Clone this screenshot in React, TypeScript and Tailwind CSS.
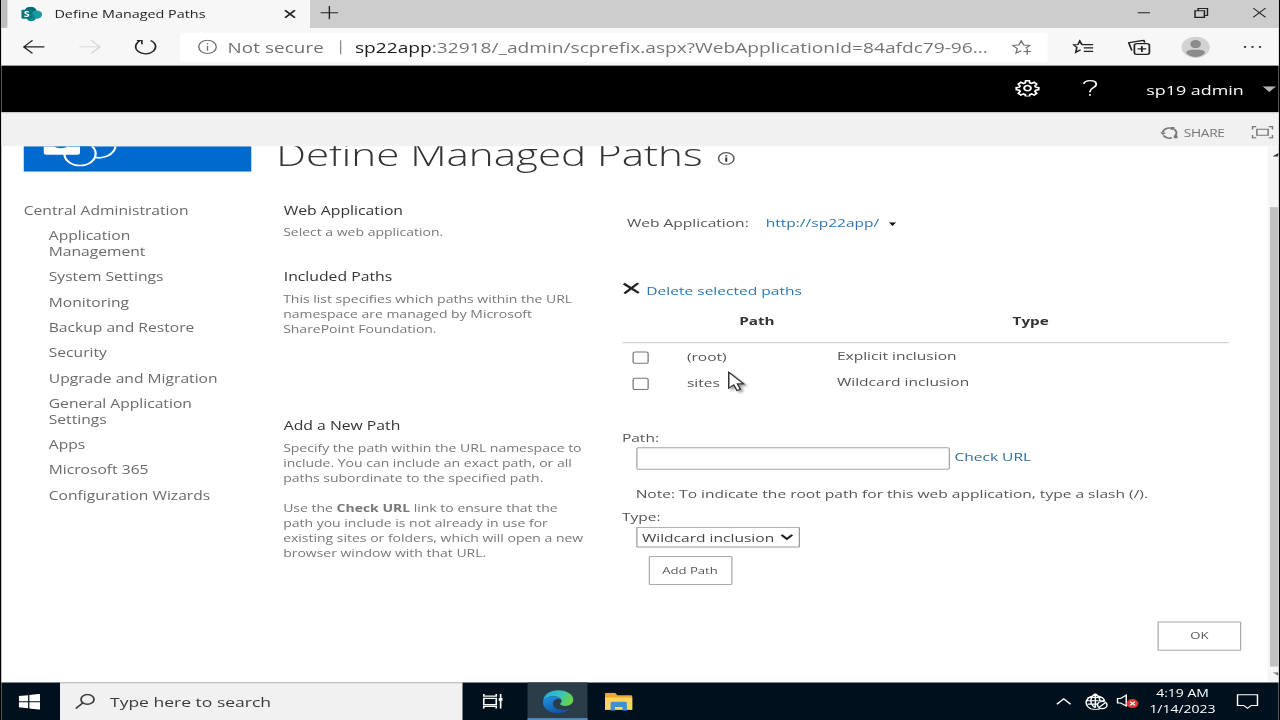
import type { ReactNode } from "react";
import clsx from "clsx";

const NAV_ITEMS = [
  ["Application", "Management"],
  ["System Settings"],
  ["Monitoring"],
  ["Backup and Restore"],
  ["Security"],
  ["Upgrade and Migration"],
  ["General Application", "Settings"],
  ["Apps"],
  ["Microsoft 365"],
  ["Configuration Wizards"],
];

const PATHS = [
  { path: "(root)", type: "Explicit inclusion" },
  { path: "sites", type: "Wildcard inclusion" },
];

interface IconProps {
  w: number;
  h: number;
  className?: string;
  stroke?: number;
  children: ReactNode;
}

const Icon = ({ w, h, className, stroke = 1, children }: IconProps) => (
  <svg
    width={w}
    height={h}
    viewBox={`0 0 ${w} ${h}`}
    fill="none"
    stroke="currentColor"
    strokeWidth={stroke}
    className={clsx("block shrink-0", className)}
  >
    {children}
  </svg>
);

const TabStrip = () => (
  <div className="flex h-[30px] bg-[#cdcdcd] text-[#222]">
    <div className="w-[5px] rounded-br-md bg-[#bdbdbd]" />
    <div className="flex w-[242px] items-center bg-[#f7f7f7] pl-[10.5px]">
      <Icon w={17} h={16} stroke={0}>
        <circle cx="7.5" cy="5" r="4.8" fill="#036c70" />
        <circle cx="12.3" cy="8.5" r="4.4" fill="#1a9ba1" />
        <circle cx="8" cy="12" r="3.6" fill="#138a90" />
        <rect x="0" y="3.5" width="9" height="9.5" rx="1" fill="#03787c" />
        <text x="2" y="11.4" fontSize="8.5" fontWeight="700" fill="#fff">S</text>
      </Icon>
      <span className="ml-[10px] w-[188px] text-[11.5px] whitespace-nowrap">
        Define Managed Paths
      </span>
      <Icon w={10} h={10} stroke={1.6} className="-ml-[5px]">
        <path d="M1 1l8 8M9 1l-8 8" />
      </Icon>
    </div>
    <div className="flex flex-1 items-center rounded-bl-md pb-[3px] pl-[8px]">
      <Icon w={15} h={15} stroke={1.1}>
        <path d="M7.5 0.5v14M0.5 7.5h14" />
      </Icon>
      <Icon w={11} h={11} className="ml-[639px]">
        <path d="M0 5.5h10" />
      </Icon>
      <Icon w={12} h={12} className="ml-[34px]" stroke={1.2}>
        <path d="M1 3.5h7.500v7H1zM3.500 3.500V1h7.500v7.500H8.500" />
      </Icon>
      <Icon w={11} h={11} className="ml-[35px]">
        <path d="M0.500 0.500l10 10M10.500 0.500l-10 10" />
      </Icon>
    </div>
  </div>
);

const Toolbar = () => (
  <div className="flex h-[40px] items-center bg-[#f7f7f7] pl-[17px] text-[#222]">
    <Icon w={18} h={16} stroke={1.2}>
      <path d="M8 1L1 8l7 7M1 8h16.500" />
    </Icon>
    <Icon w={18} h={16} stroke={1} className="ml-[27px] text-[#d0d0d0]">
      <path d="M10 1l7 7-7 7M17 8H0.500" />
    </Icon>
    <Icon w={19} h={18} stroke={1.3} className="ml-[26px]">
      <path d="M5 2.500A8 7.600 0 1 0 13.500 2.200M2.500 2.200h4v4" />
    </Icon>
    <div className="ml-[18px] flex h-[31px] w-[694px] items-center rounded-[3px] bg-white pl-[14px] text-[#707070]">
      <Icon w={16} h={16} stroke={1.1}>
        <circle cx="8" cy="8" r="7" />
        <path d="M8 7v5M8 4v1.500" />
      </Icon>
      <span className="ml-[8px] w-[90px] pt-px text-[15px] tracking-[0.1px] whitespace-nowrap">Not secure</span>
      <span className="h-[15px] w-px bg-[#8a8a8a]" />
      <span className="ml-[11px] w-[515px] pt-px text-[15.35px] tracking-[-0.02px] whitespace-nowrap text-[#767676]">
        <span className="text-[#1b1b1b]">sp22app</span>
        :32918/_admin/scprefix.aspx?WebApplicationId=84afdc79-96...
      </span>
      <Icon w={17} h={17} stroke={1.1} className="ml-[10px]">
        <path d="M8 12.200l-4.200 2.500 1-4.900L1.200 6.500l4.800-.6L8 1.500l2 4.400 4.800.6-3.200 3" />
        <path d="M12.800 10v6M9.800 13h6" />
      </Icon>
    </div>
    <Icon w={17} h={16} stroke={1.3} className="ml-[20px]">
      <path d="M8.500 5.300H7.300L5.800 1.500 4.400 5.500 0.800 5.800 3.500 8.500 2.600 13.800 6.500 11M7.500 5.500H16.500M9 9h7.500M9 12.700h7.500" />
    </Icon>
    <Icon w={19} h={17} stroke={1.4} className="ml-[27px]">
      <rect x="5.500" y="4.500" width="12" height="11.500" rx="2" />
      <path d="M11.500 7v6.500M8 10.200h7M3.500 12L1 3.500 13 1l.8 2.500" />
    </Icon>
    <Icon w={23} h={23} stroke={0} className="ml-[24px]">
      <circle cx="11.500" cy="11.500" r="11.300" fill="#d2d2d2" />
      <circle cx="11.500" cy="8" r="4.300" fill="#8b8b8b" />
      <path d="M4 17.500c0-3 3-3.500 7.500-3.500s7.500.5 7.500 3.500c-2 3-4.500 4.300-7.500 4.300s-5.500-1.300-7.500-4.300z" fill="#8b8b8b" />
    </Icon>
    <Icon w={16} h={4} stroke={0} className="ml-[26px]">
      <g fill="#222">
        <circle cx="2" cy="2" r="1" />
        <circle cx="8" cy="2" r="1" />
        <circle cx="14" cy="2" r="1" />
      </g>
    </Icon>
  </div>
);

const SuiteBar = () => (
  <div className="flex h-[50px] items-center justify-end bg-black text-white">
    <Icon w={20} h={18} stroke={1.6} className="mb-[2px]">
      <circle cx="10" cy="9" r="2.700" />
      <path d="M8.600 1.200h2.800l.5 2.200 1.400.6 2-1.200 2 2-1.300 1.900.6 1.300 2.300.5v2.200l-2.300.5-.6 1.400 1.300 1.900-2 1.900-2-1.200-1.400.6-.5 2.200H8.600l-.5-2.200-1.400-.6-2 1.200-2-1.900L4 12.600l-.6-1.400-2.300-.5V8.500l2.300-.5.6-1.300-1.300-1.900 2-2 2 1.200 1.400-.6z" />
    </Icon>
    <Icon w={14} h={18} stroke={1.500} className="mb-[2px] ml-[33px]">
      <path d="M2 4.500C2.500 2 4.500 1 7 1c3 0 5 1.500 5 4 0 3.500-5 3.800-5 7.500v.8M7 15.500v1.500" />
    </Icon>
    <span className="ml-[38px] w-[93px] pt-px text-[14.3px] whitespace-nowrap">sp19 admin</span>
    <Icon w={11} h={6} stroke={0}>
      <path d="M0 0h11L5.500 6z" fill="#b5b5b5" />
    </Icon>
    <span className="w-[2px]" />
  </div>
);

const RibbonRow = () => (
  <div className="flex h-[36px] items-center justify-end border-t border-[#dcdcdc] bg-[#f1f1f1] pt-[6px] text-[#777]">
    <Icon w={15} h={14} stroke={1.700}>
      <path d="M2.200 6A5.300 5.300 0 0 1 8.500 1.700M11.500 3a5.300 5.300 0 0 1 .5 7M9.500 12A5.300 5.300 0 0 1 2.800 9.500" />
      <path d="M0 6l2.200 3L5 6.500zM11 9.500h3v3h-3zM8.500 0.500h3v3h-3z" fill="currentColor" stroke="none" />
    </Icon>
    <span className="ml-[4px] w-[54px] pt-px text-[11px] tracking-[-0.25px]">SHARE</span>
    <Icon w={18} h={14} stroke={1.2} className="mb-[1px]">
      <path d="M4 1H1v3M14 1h3v3M4 13H1v-3M14 13h3v-3M4.500 3.800h9v6.400h-9z" />
    </Icon>
    <span className="w-[4px]" />
  </div>
);

const Sidebar = () => (
  <nav className="w-[182px] shrink-0 text-[12.5px] leading-[17px] whitespace-nowrap text-[#6a6a6a]">
    <div className="h-[27px] bg-[#0069cc]">
      <Icon w={182} h={27} stroke={1.800} className="text-white">
        <path d="M55 11c8 4 18-2 18.500-12" />
        <circle cx="45" cy="8" r="12.500" fill="#0069cc" />
        <path d="M16 0h29v7q0 2-2 2H18q-2 0-2-2z" fill="#fff" stroke="none" />
        <path d="M24 0q5 4.500 12 0z" fill="#0069cc" stroke="none" />
      </Icon>
    </div>
    <p className="mt-[32.500px]">Central Administration</p>
    <ul className="mt-[10px] space-y-[10px] pl-[20px]">
      {NAV_ITEMS.map((lines) => (
        <li key={lines[0]}>
          {lines.map((line) => (
            <div key={line}>{line}</div>
          ))}
        </li>
      ))}
    </ul>
  </nav>
);

interface SectionProps {
  title: string;
  className: string;
  description: ReactNode;
  children: ReactNode;
}

const Section = ({ title, className, description, children }: SectionProps) => (
  <section className={clsx("flex", className)}>
    <div className="w-[271px] shrink-0 pt-px whitespace-nowrap">
      <h3 className="pl-[0.5px] text-[12.6px] leading-[18px] text-[#333]">{title}</h3>
      <div className="mt-[6px] text-[11.2px] leading-[16px] text-[#777]">{description}</div>
    </div>
    <div className="flex-1 text-[12.45px] whitespace-nowrap text-[#555]">{children}</div>
  </section>
);

const PathTable = () => (
  <div className="w-[485px]">
    <div className="flex h-[42px] items-start border-b border-[#c6c6c6] pt-[10px] font-bold text-[#333]">
      <span className="w-[216px] text-center text-[12.2px] leading-[18px]">Path</span>
      <span className="w-[222px] text-center text-[12.2px] leading-[18px]">Type</span>
    </div>
    {PATHS.map(({ path, type }) => (
      <div key={path} className="flex h-[28px] items-center pt-[2px]">
        <span className="ml-[8px] size-[13px] rounded-[2px] border border-[#767676] bg-white" />
        <span className="ml-[31px] w-[120px] pt-[1px]">{path}</span>
        <span className="pb-[2px]">{type}</span>
      </div>
    ))}
  </div>
);

const MainContent = () => (
  <main className="ml-[20px] flex-1">
    <div className="-mt-[16px] flex h-[75px] items-start">
      <h1 className="w-[353px] text-[33.7px] leading-[49px] font-light whitespace-nowrap text-[#333]">
        Define Managed Paths
      </h1>
      <Icon w={14} h={14} stroke={1.200} className="mt-[22px] text-[#555]">
        <circle cx="7" cy="7" r="6.200" />
        <path d="M7 6v4.500M7 3.500v1.500" stroke="#333" strokeWidth="1.600" />
      </Icon>
    </div>
    <div className="pl-[5.500px]">
      <Section title="Web Application" className="h-[71px]" description="Select a web application.">
        <div className="flex items-center pt-[14px] pl-[4px] leading-[18px]">
          <span className="w-[111px]">Web Application:</span>
          <span className="w-[98px] text-[#2c76b5]">http://sp22app/</span>
          <Icon w={6} h={4} stroke={0} className="mt-[2px]">
            <path d="M0 0h6L3 4z" fill="#111" />
          </Icon>
        </div>
      </Section>

      <Section
        title="Included Paths"
        className="h-[158.500px]"
        description={
          <>
            This list specifies which paths within the URL
            <br />
            namespace are managed by Microsoft
            <br />
            SharePoint Foundation.
          </>
        }
      >
        <div className="flex h-[38px] items-start pt-[15px] leading-[18px]">
          <Icon w={14} h={13} stroke={2.200} className="text-[#222]">
            <path d="M1 1.500l12 10M12.500 1L1.500 12" />
          </Icon>
          <span className="ml-[5.500px] pt-px text-[#2c76b5]">Delete selected paths</span>
        </div>
        <PathTable />
      </Section>

      <Section
        title="Add a New Path"
        className="h-[218.500px]"
        description={
          <>
            Specify the path within the URL namespace to
            <br />
            include. You can include an exact path, or all
            <br />
            paths subordinate to the specified path.
            <br />
            <br />
            Use the <b>Check URL</b> link to ensure that the
            <br />
            path you include is not already in use for
            <br />
            existing sites or folders, which will open a new
            <br />
            browser window with that URL.
          </>
        }
      >
        <div className="pt-[13px] leading-[18px]">
          <p>Path:</p>
          <div className="mt-[1px] flex items-center pl-[11px]">
            <span className="h-[24px] w-[251px] rounded-[2px] border border-[#a3a3a3]" />
            <span className="ml-[4px] pb-px text-[#2c6f9f]">Check URL</span>
          </div>
          <p className="mt-[17px] pl-[11px]">
            Note: To indicate the root path for this web application, type a slash (/).
          </p>
          <p className="mt-[7.500px]">Type:</p>
          <div className="mt-[1px] ml-[11px] flex h-[22px] w-[131px] items-center justify-between rounded-[1px] border border-[#999] pr-[4px] pl-[4px] text-[#444]">
            <span className="pt-px">Wildcard inclusion</span>
            <Icon w={11} h={8} stroke={2} className="text-[#222]">
              <path d="M1.200 1.500l4.300 4.300 4.300-4.300" />
            </Icon>
          </div>
          <div className="mt-[8.500px] ml-[21px] flex h-[31px] w-[67px] items-center justify-center rounded-[1px] border border-[#ababab] text-[10.500px]">
            Add Path
          </div>
        </div>
      </Section>
      <div className="ml-[699.500px] flex h-[31px] w-[67px] items-center justify-center rounded-[1px] border border-[#ababab] text-[10.500px] text-[#555]">
        OK
      </div>
    </div>
  </main>
);

const Scrollbar = () => (
  <div className="flex w-[9px] flex-col items-end justify-between overflow-hidden bg-[#f5f5f5]">
    <Icon w={5} h={5} stroke={0} className="mt-[7px]">
      <path d="M0 4h5V0z" fill="#333" />
    </Icon>
    <span className="mt-[53px] w-[7px] flex-1 bg-[#c1c1c1]" />
    <Icon w={5} h={5} stroke={0} className="mt-[6px] mb-[6px]">
      <path d="M0 0h5v4z" fill="#777" />
    </Icon>
  </div>
);

const Taskbar = () => (
  <div className="flex h-[40px] items-center bg-[#01101d] text-white">
    <div className="flex w-[47px] justify-center">
      <Icon w={17} h={17} stroke={0} className="-ml-[2px]">
        <path d="M0 2.500l7.500-1V8H0zM8.500 1.300L17 0v8H8.500zM0 9h7.500v6.500L0 14.500zM8.500 9H17v8l-8.500-1.300z" fill="#fff" />
      </Icon>
    </div>
    <div className="flex h-full w-[322px] items-center border-t border-[#c9c9c9] bg-[#f1f1f1] pl-[12px] text-[#3a3a3a]">
      <Icon w={16} h={17} stroke={1.400}>
        <circle cx="10" cy="6" r="5.200" />
        <path d="M6.200 9.800L0.600 15.800" />
      </Icon>
      <span className="ml-[12px] text-[14px] whitespace-nowrap">Type here to search</span>
    </div>
    <div className="flex w-[52px] justify-center">
      <Icon w={17} h={16} stroke={1.300} className="-ml-[4px]">
        <path d="M1 0v2.500h10V0M1 5h10v6.500H1zM1 16v-2.500h10V16M14.500 0v16" />
        <path d="M13 4.500h3v3h-3z" fill="#fff" stroke="none" />
      </Icon>
    </div>
    <div className="flex h-full w-[48px] items-center justify-center border-b-2 border-[#4c8fc8] bg-[#2b3d49]">
      <svg width="25" height="25" viewBox="0 0 24 24" className="mt-[2px] block">
        <defs>
          <linearGradient id="edgeTop" x1="0" y1="0" x2="1" y2="0.3">
            <stop offset="0" stopColor="#27a5e0" />
            <stop offset="0.55" stopColor="#35c1c8" />
            <stop offset="1" stopColor="#65d34e" />
          </linearGradient>
          <linearGradient id="edgeBottom" x1="0" y1="0" x2="0.5" y2="1">
            <stop offset="0" stopColor="#2196e3" />
            <stop offset="1" stopColor="#1056a8" />
          </linearGradient>
        </defs>
        <path d="M0.500 11C1 4.500 6 .3 12 .3c7 0 11.700 4.700 11.700 9.700 0 4-3 6.300-6.200 6.300-2.300 0-4-.9-4-1.900 0-.8 1.200-1.200 1.200-3.200 0-2.600-2.700-4.900-6.200-4.900C4.500 6.300 1.500 8.500.5 11z" fill="url(#edgeTop)" />
        <path d="M.4 12C1 8.500 4.500 6.300 8.500 6.300c2.500 0 4.700 1.200 5.700 2.900-3.600-.7-6.200 1.500-6.200 5 0 4.500 4.500 6.800 8.500 6.300 2-.2 3.500-1 4.800-2-2 3.500-5.300 5.200-9.300 5.200C5.500 23.700 0 19 .4 12z" fill="url(#edgeBottom)" />
      </svg>
    </div>
    <Icon w={22} h={19} stroke={0} className="ml-[13.500px]">
      <path d="M0 1.500Q0 0 1.500 0H8l2 2.500h10.500Q22 2.500 22 4v14H0z" fill="#e9a92c" />
      <path d="M0 5h22v13H0z" fill="#fcd462" />
      <path d="M4.500 11q0-1.500 1.500-1.500h10q1.500 0 1.500 1.500v8H14v-4H8v4H4.500z" fill="#3f8fd2" />
    </Icon>
    <div className="ml-auto flex items-center pr-[16px]">
      <Icon w={14} h={8} stroke={1.300}>
        <path d="M1.500 7.200L7 1.500l5.500 5.700" />
      </Icon>
      <Icon w={19} h={18} stroke={1.200} className="ml-[10px]">
        <path d="M14 15.500A7.500 7.500 0 1 1 15.800 9M8.300 1C3.500 5 3.500 12 8.300 16M8.300 1c2.700 2.500 3.600 5 3.700 8M8.300 1v15M1 8.500h14.500M2 5h12.500M2 12h8" />
        <circle cx="13.800" cy="13" r="3.800" fill="#01101d" />
        <path d="M11.200 15.500l5.200-5" />
      </Icon>
      <Icon w={18} h={16} stroke={1.200} className="ml-[6px]">
        <path d="M1 5h2.500L8 1.500v11.500L3.500 9.800H1z" />
        <circle cx="13" cy="10.500" r="4.800" fill="#d93a32" stroke="none" />
        <path d="M11 8.500l4 4M15 8.500l-4 4" stroke="#fff" />
      </Icon>
      <div className="ml-[7px] w-[56px] text-center text-[11.200px] leading-[18px] whitespace-nowrap">
        <div>4:19 AM</div>
        <div>1/14/2023</div>
      </div>
      <Icon w={18} h={17} stroke={1.200} className="ml-[15px]">
        <path d="M1 1h16v11.500h-5L9 15.500l-3-3H1z" />
      </Icon>
    </div>
  </div>
);

// Remote desktop session: a 1024x768 desktop stretched over a 16:9 window
export default function App() {
  return (
    <div className="h-[720px] w-[1280px] overflow-hidden bg-white">
      <div className="relative flex h-[768px] w-[1024px] origin-top-left scale-x-125 scale-y-[0.9375] flex-col overflow-hidden border-x border-black bg-white font-['Open_Sans','Noto_Sans',sans-serif]">
        <TabStrip />
        <Toolbar />
        <SuiteBar />
        <RibbonRow />
        <div className="flex h-[572px] overflow-hidden">
          <div className="flex min-w-0 flex-1 pl-[18px]">
            <Sidebar />
            <MainContent />
          </div>
          <Scrollbar />
        </div>
        <Taskbar />
        {/* Mouse pointer */}
        <svg
          width="16"
          height="22"
          viewBox="0 0 16 22"
          className="absolute top-[396px] left-[581px] drop-shadow-[2px_2px_1px_rgba(0,0,0,0.35)]"
        >
          <path d="M1 1v17l4-3.500L7.500 20.500l2.800-1.300L8 13.500h5z" fill="#fff" stroke="#333" strokeWidth="1.2" />
        </svg>
      </div>
    </div>
  );
}
